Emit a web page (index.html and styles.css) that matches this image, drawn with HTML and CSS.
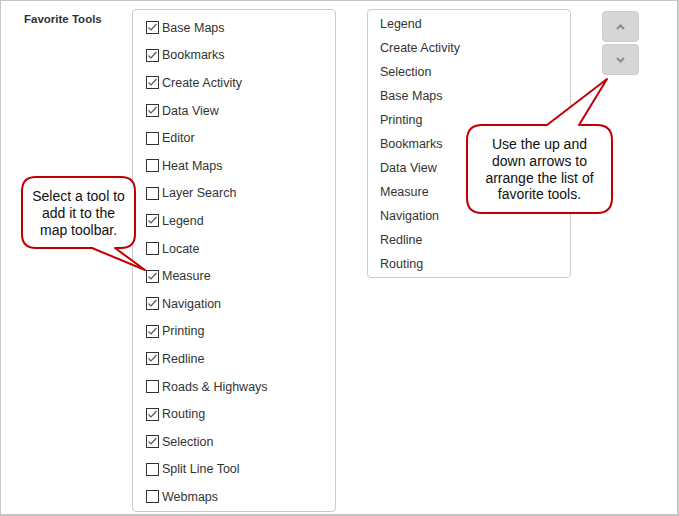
FILE: index.html
```html
<!DOCTYPE html>
<html>
<head>
<meta charset="utf-8">
<link rel="stylesheet" href="styles.css">
</head>
<body>
<div class="frame">
  <div class="label">Favorite Tools</div>
  <div class="tools-box">
    <div class="tool"><svg class="cb" viewBox="0 0 13 13"><rect x="0.5" y="0.5" width="12" height="12"/><polyline points="2.5,6.5 5,9 10.5,3"/></svg><span>Base Maps</span></div>
    <div class="tool"><svg class="cb" viewBox="0 0 13 13"><rect x="0.5" y="0.5" width="12" height="12"/><polyline points="2.5,6.5 5,9 10.5,3"/></svg><span>Bookmarks</span></div>
    <div class="tool"><svg class="cb" viewBox="0 0 13 13"><rect x="0.5" y="0.5" width="12" height="12"/><polyline points="2.5,6.5 5,9 10.5,3"/></svg><span>Create Activity</span></div>
    <div class="tool"><svg class="cb" viewBox="0 0 13 13"><rect x="0.5" y="0.5" width="12" height="12"/><polyline points="2.5,6.5 5,9 10.5,3"/></svg><span>Data View</span></div>
    <div class="tool"><svg class="cb" viewBox="0 0 13 13"><rect x="0.5" y="0.5" width="12" height="12"/></svg><span>Editor</span></div>
    <div class="tool"><svg class="cb" viewBox="0 0 13 13"><rect x="0.5" y="0.5" width="12" height="12"/></svg><span>Heat Maps</span></div>
    <div class="tool"><svg class="cb" viewBox="0 0 13 13"><rect x="0.5" y="0.5" width="12" height="12"/></svg><span>Layer Search</span></div>
    <div class="tool"><svg class="cb" viewBox="0 0 13 13"><rect x="0.5" y="0.5" width="12" height="12"/><polyline points="2.5,6.5 5,9 10.5,3"/></svg><span>Legend</span></div>
    <div class="tool"><svg class="cb" viewBox="0 0 13 13"><rect x="0.5" y="0.5" width="12" height="12"/></svg><span>Locate</span></div>
    <div class="tool"><svg class="cb" viewBox="0 0 13 13"><rect x="0.5" y="0.5" width="12" height="12"/><polyline points="2.5,6.5 5,9 10.5,3"/></svg><span>Measure</span></div>
    <div class="tool"><svg class="cb" viewBox="0 0 13 13"><rect x="0.5" y="0.5" width="12" height="12"/><polyline points="2.5,6.5 5,9 10.5,3"/></svg><span>Navigation</span></div>
    <div class="tool"><svg class="cb" viewBox="0 0 13 13"><rect x="0.5" y="0.5" width="12" height="12"/><polyline points="2.5,6.5 5,9 10.5,3"/></svg><span>Printing</span></div>
    <div class="tool"><svg class="cb" viewBox="0 0 13 13"><rect x="0.5" y="0.5" width="12" height="12"/><polyline points="2.5,6.5 5,9 10.5,3"/></svg><span>Redline</span></div>
    <div class="tool"><svg class="cb" viewBox="0 0 13 13"><rect x="0.5" y="0.5" width="12" height="12"/></svg><span>Roads &amp; Highways</span></div>
    <div class="tool"><svg class="cb" viewBox="0 0 13 13"><rect x="0.5" y="0.5" width="12" height="12"/><polyline points="2.5,6.5 5,9 10.5,3"/></svg><span>Routing</span></div>
    <div class="tool"><svg class="cb" viewBox="0 0 13 13"><rect x="0.5" y="0.5" width="12" height="12"/><polyline points="2.5,6.5 5,9 10.5,3"/></svg><span>Selection</span></div>
    <div class="tool"><svg class="cb" viewBox="0 0 13 13"><rect x="0.5" y="0.5" width="12" height="12"/></svg><span>Split Line Tool</span></div>
    <div class="tool"><svg class="cb" viewBox="0 0 13 13"><rect x="0.5" y="0.5" width="12" height="12"/></svg><span>Webmaps</span></div>
  </div>
  <div class="order-box">
    <div class="item">Legend</div>
    <div class="item">Create Activity</div>
    <div class="item">Selection</div>
    <div class="item">Base Maps</div>
    <div class="item">Printing</div>
    <div class="item">Bookmarks</div>
    <div class="item">Data View</div>
    <div class="item">Measure</div>
    <div class="item">Navigation</div>
    <div class="item">Redline</div>
    <div class="item">Routing</div>
  </div>
  <div class="buttons">
    <div class="btn"><svg width="9" height="6" viewBox="0 0 9 6"><polyline points="1,5 4.5,1.5 8,5"/></svg></div>
    <div class="btn"><svg width="9" height="6" viewBox="0 0 9 6"><polyline points="1,1 4.5,4.5 8,1"/></svg></div>
  </div>

  <svg class="callouts" width="679" height="516" viewBox="0 0 679 516">
    <path d="M 36 177 H 121 Q 135 177 135 191 V 234 Q 135 248 121 248 H 115 L 145 270 L 92 248 H 36 Q 22 248 22 234 V 191 Q 22 177 36 177 Z"/>
    <path d="M 482 125 H 547 L 607 79 L 579 125 H 597 Q 612 125 612 140 V 198 Q 612 213 597 213 H 482 Q 467 213 467 198 V 140 Q 467 125 482 125 Z"/>
  </svg>
  <div class="callout-text left-text">Select a tool to<br>add it to the<br>map toolbar.</div>
  <div class="callout-text right-text">Use the up and<br>down arrows to<br>arrange the list of<br>favorite tools.</div>
</div>
</body>
</html>
```

FILE: styles.css
```css
html, body {
  margin: 0;
  padding: 0;
  background: #ffffff;
}

.frame {
  position: relative;
  width: 679px;
  height: 516px;
  box-sizing: border-box;
  border: 1px solid #c6c6c6;
  border-right-width: 2px;
  border-bottom-width: 2px;
  padding: 8px 0 0 23px;
  display: flex;
  align-items: flex-start;
  font-family: "Liberation Sans", Arial, sans-serif;
  color: #333333;
  overflow: hidden;
}

.label {
  width: 108px;
  flex: none;
  margin-top: 3px;
  font-size: 11.5px;
  line-height: 14px;
  font-weight: bold;
  color: #333333;
}

.tools-box {
  width: 204px;
  flex: none;
  box-sizing: border-box;
  border: 1px solid #cccccc;
  border-radius: 4px;
  padding: 4px 0 0 13px;
}

.tool {
  height: 27.6px;
  display: flex;
  align-items: center;
  font-size: 12.5px;
}

.cb {
  width: 13px;
  height: 13px;
  flex: none;
  margin-right: 3px;
}

.cb rect {
  fill: #ffffff;
  stroke: #333333;
  stroke-width: 1;
}

.cb polyline {
  fill: none;
  stroke: #555555;
  stroke-width: 1.2;
}

.order-box {
  width: 204px;
  flex: none;
  margin-left: 31px;
  box-sizing: border-box;
  border: 1px solid #cccccc;
  border-radius: 4px;
  padding: 1.5px 0 1.5px 12px;
}

.item {
  height: 24px;
  line-height: 24px;
  font-size: 12.5px;
}

.buttons {
  margin-left: 31px;
  margin-top: 2px;
  display: flex;
  flex-direction: column;
  gap: 2px;
}

.btn {
  width: 37px;
  height: 31px;
  box-sizing: border-box;
  background: #d6d6d6;
  border: 1px solid #cdcdcd;
  border-radius: 4px;
  display: flex;
  align-items: center;
  justify-content: center;
}

.btn polyline {
  fill: none;
  stroke: #8a8a8a;
  stroke-width: 2;
}

.callouts {
  position: absolute;
  left: -1px;
  top: -1px;
  pointer-events: none;
}

.callouts path {
  fill: #ffffff;
  stroke: #c00000;
  stroke-width: 2;
  stroke-linejoin: round;
}

.callout-text {
  position: absolute;
  display: flex;
  align-items: center;
  justify-content: center;
  text-align: center;
  font-family: "Liberation Sans", Arial, sans-serif;
  font-size: 14px;
  color: #111111;
}

.left-text {
  left: 21px;
  top: 176px;
  width: 113px;
  height: 73px;
  line-height: 17px;
}

.right-text {
  left: 466px;
  top: 124px;
  width: 145px;
  height: 89px;
  line-height: 16.7px;
}
```
